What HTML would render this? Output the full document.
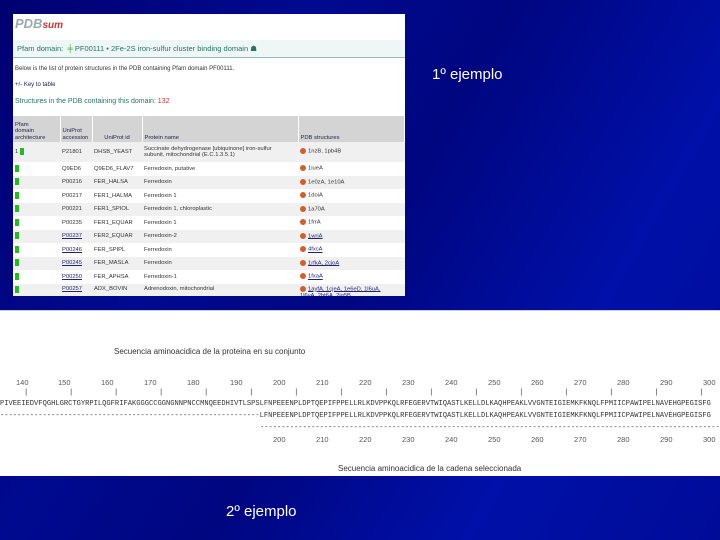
<!DOCTYPE html>
<html><head><meta charset="utf-8"><style>
*{margin:0;padding:0;box-sizing:border-box}
body{width:720px;height:540px;overflow:hidden;position:relative;font-family:"Liberation Sans",sans-serif;
background:linear-gradient(120deg,#000070 0%,#000a90 30%,#000680 50%,#0010a8 75%,#000c98 100%)}
.a{position:absolute;white-space:nowrap}
.panel{position:absolute;left:13px;top:14px;width:392px;height:282px;background:#fff;overflow:hidden;font-size:6px;color:#333}
.lbl{color:#fff;font-size:15px}
table{position:absolute;left:0;top:102px;width:392px;border-collapse:collapse;font-size:5.8px;line-height:6.5px;table-layout:fixed}
td{padding:0 2px;height:13.5px;vertical-align:middle;white-space:nowrap;overflow:hidden}
tr.h td{background:#d4d4d4;color:#225;height:26px;vertical-align:bottom;border-right:1px solid #fff;padding-bottom:1px}
tr.s td{background:#f0f0f0}
.ic{display:inline-block;width:6px;height:6px;border-radius:50%;background:#d0602a;vertical-align:middle;margin-right:2px}
.g{display:inline-block;width:4px;height:7px;background:#2b2;vertical-align:middle}
.lk{color:#227;text-decoration:underline}
.band{position:absolute;left:0;top:310px;width:720px;height:166px;background:#fff;border-top:1px solid #ccd}
.m{font-family:"Liberation Mono",monospace;font-size:7.1px;color:#333}
.n{font-size:7.5px;color:#555}
</style></head><body>
<div class="panel">
 <div class="a" style="left:2px;top:2px;font:bold 13px 'Liberation Sans';color:#9aa;font-style:italic">PDB<span style="color:#c33;font-size:10px">sum</span></div>
 <div class="a" style="left:0;top:26px;width:392px;height:18px;background:#eef6f6;border-bottom:1px solid #9bb"></div>
 <div class="a" style="left:4px;top:30px;font-size:7.5px;color:#276">Pfam domain: &nbsp;<span style="color:#2a2">╪</span> PF00111 • 2Fe-2S iron-sulfur cluster binding domain ☗</div>
 <div class="a" style="left:2px;top:52px">Below is the list of protein structures in the PDB containing Pfam domain PF00111.</div>
 <div class="a" style="left:2px;top:68px;color:#225">+/- Key to table</div>
 <div class="a" style="left:2px;top:84px;font-size:7px;color:#276">Structures in the PDB containing this domain: <span style="color:#c33">132</span></div>
 <table>
 <colgroup><col style="width:47px"><col style="width:32px"><col style="width:50px"><col style="width:156px"><col></colgroup>
 <tr class="h"><td>Pfam<br>domain<br>architecture</td><td>UniProt<br>accession</td><td style="text-align:center">UniProt id</td><td>Protein name</td><td>PDB structures</td></tr>
 <tr class="s"><td style="height:20px">1 <span class="g"></span></td><td>P21801</td><td>DHSB_YEAST</td><td>Succinate dehydrogenase [ubiquinone] iron-sulfur<br>subunit, mitochondrial (E.C.1.3.5.1)</td><td><span class="ic"></span>1nzB, 1pb4B</td></tr>
 <tr><td><span class="g"></span></td><td>Q9ED6</td><td>Q9ED6_FLAV7</td><td>Ferredoxin, putative</td><td><span class="ic"></span>1iueA</td></tr>
 <tr class="s"><td><span class="g"></span></td><td>P00216</td><td>FER_HALSA</td><td>Ferredoxin</td><td><span class="ic"></span>1e0zA, 1e10A</td></tr>
 <tr><td><span class="g"></span></td><td>P00217</td><td>FER1_HALMA</td><td>Ferredoxin 1</td><td><span class="ic"></span>1doiA</td></tr>
 <tr class="s"><td><span class="g"></span></td><td>P00221</td><td>FER1_SPIOL</td><td>Ferredoxin 1, chloroplastic</td><td><span class="ic"></span>1a70A</td></tr>
 <tr><td><span class="g"></span></td><td>P00235</td><td>FER1_EQUAR</td><td>Ferredoxin 1</td><td><span class="ic"></span>1frrA</td></tr>
 <tr class="s"><td><span class="g"></span></td><td class="lk">P00237</td><td>FER2_EQUAR</td><td>Ferredoxin-2</td><td><span class="ic"></span><span class="lk">1wriA</span></td></tr>
 <tr><td><span class="g"></span></td><td class="lk">P00246</td><td>FER_SPIPL</td><td>Ferredoxin</td><td><span class="ic"></span><span class="lk">4fxcA</span></td></tr>
 <tr class="s"><td><span class="g"></span></td><td class="lk">P00245</td><td>FER_MASLA</td><td>Ferredoxin</td><td><span class="ic"></span><span class="lk">1rfkA, 2cjoA</span></td></tr>
 <tr><td><span class="g"></span></td><td class="lk">P00250</td><td>FER_APHSA</td><td>Ferredoxin-1</td><td><span class="ic"></span><span class="lk">1fxaA</span></td></tr>
 <tr class="s"><td style="vertical-align:top;height:20px;padding-top:2px"><span class="g"></span></td><td class="lk" style="vertical-align:top;padding-top:2px">P00257</td><td style="vertical-align:top;padding-top:2px">ADX_BOVIN</td><td style="vertical-align:top;padding-top:2px">Adrenodoxin, mitochondrial</td><td style="vertical-align:top;padding-top:2px"><span class="ic"></span><span class="lk">1ayfA, 1cjeA, 1e6eD, 1l6uA,<br>1l6vA, 2bt6A, 2jq5B</span></td></tr>
 </table>
</div>
<div class="a lbl" style="left:432px;top:66px">1º ejemplo</div>
<div class="band">
 <div class="a" style="left:114px;top:36px;font-size:8px;color:#333">Secuencia aminoacidica de la proteina en su conjunto</div>
 <div class="a n" style="left:16px;top:67px">140</div><div class="a n" style="left:58px;top:67px">150</div><div class="a n" style="left:101px;top:67px">160</div><div class="a n" style="left:144px;top:67px">170</div><div class="a n" style="left:187px;top:67px">180</div><div class="a n" style="left:230px;top:67px">190</div><div class="a n" style="left:273px;top:67px">200</div><div class="a n" style="left:316px;top:67px">210</div><div class="a n" style="left:359px;top:67px">220</div><div class="a n" style="left:402px;top:67px">230</div><div class="a n" style="left:445px;top:67px">240</div><div class="a n" style="left:488px;top:67px">250</div><div class="a n" style="left:531px;top:67px">260</div><div class="a n" style="left:574px;top:67px">270</div><div class="a n" style="left:617px;top:67px">280</div><div class="a n" style="left:660px;top:67px">290</div><div class="a n" style="left:703px;top:67px">300</div>
 <div class="a m" style="left:24px;top:78px;word-spacing:36.5px">| | | | | | | | | | | | | | | | |</div>
 <div class="a m" style="left:0;top:89px">PIVEEIEDVFQGHLGRCTGYRPILQGFRIFAKGGGCCGGNGNNPNCCMNQEEDHIVTLSPSLFNPEEENPLDPTQEPIFPPELLRLKDVPPKQLRFEGERVTWIQASTLKELLDLKAQHPEAKLVVGNTEIGIEMKFKNQLFPMIICPAWIPELNAVEHGPEGISFG</div>
 <div class="a m" style="left:0;top:101px">-------------------------------------------------------------LFNPEEENPLDPTQEPIFPPELLRLKDVPPKQLRFEGERVTWIQASTLKELLDLKAQHPEAKLVVGNTEIGIEMKFKNQLFPMIICPAWIPELNAVEHGPEGISFG</div>
 <div class="a m" style="left:260px;top:113px">------------------------------------------------------------------------------------------------------------</div>
 <div class="a n" style="left:273px;top:124px">200</div><div class="a n" style="left:316px;top:124px">210</div><div class="a n" style="left:359px;top:124px">220</div><div class="a n" style="left:402px;top:124px">230</div><div class="a n" style="left:445px;top:124px">240</div><div class="a n" style="left:488px;top:124px">250</div><div class="a n" style="left:531px;top:124px">260</div><div class="a n" style="left:574px;top:124px">270</div><div class="a n" style="left:617px;top:124px">280</div><div class="a n" style="left:660px;top:124px">290</div><div class="a n" style="left:703px;top:124px">300</div>
 <div class="a" style="left:338px;top:153px;font-size:8px;color:#333">Secuencia aminoacidica de la cadena seleccionada</div>
</div>
<div class="a lbl" style="left:226px;top:503px">2º ejemplo</div>
</body></html>
